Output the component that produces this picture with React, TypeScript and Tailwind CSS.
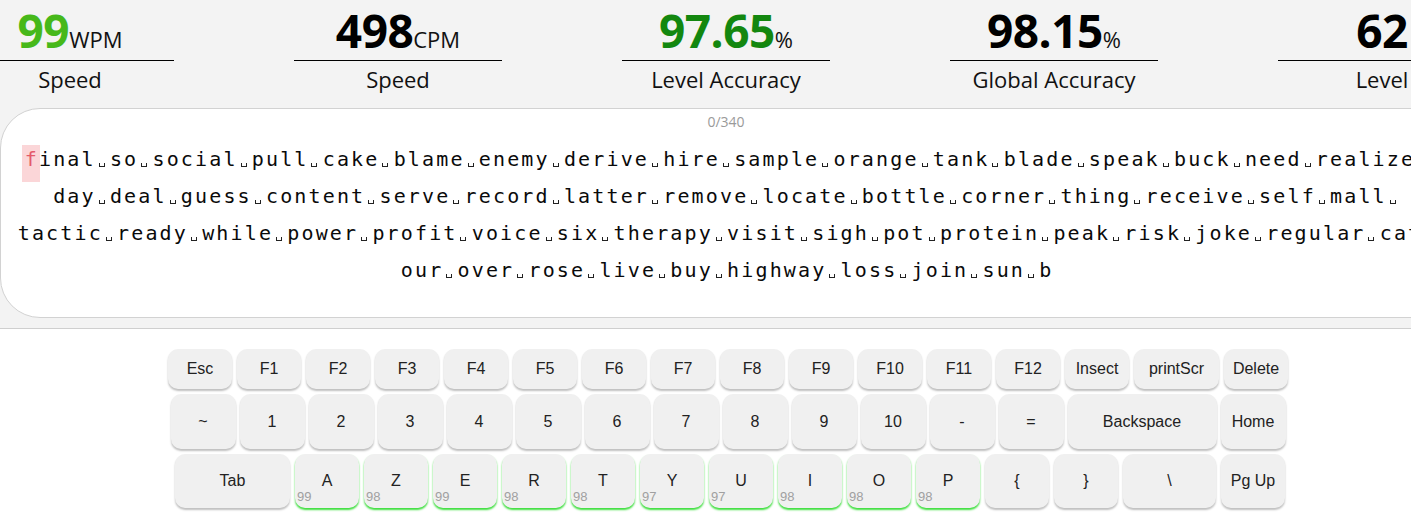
import React from 'react'

// stats across the top
const STATS = [
  { value: '99', unit: 'WPM', label: 'Speed', cls: 'text-[#46b81a]' },
  { value: '498', unit: 'CPM', label: 'Speed', cls: 'text-black' },
  { value: '97.65', unit: '%', label: 'Level Accuracy', cls: 'text-[#13870f]' },
  { value: '98.15', unit: '%', label: 'Global Accuracy', cls: 'text-black' },
  { value: '62', unit: '', label: 'Level', cls: 'text-black' },
]

const LINES = [
  'final so social pull cake blame enemy derive hire sample orange tank blade speak buck need realize ',
  'day deal guess content serve record latter remove locate bottle corner thing receive self mall ',
  'tactic ready while power profit voice six therapy visit sigh pot protein peak risk joke regular cat ',
  'our over rose live buy highway loss join sun b',
]

type Key = { label: string; w: string; score?: number }

const ROW1: Key[] = [
  { label: 'Esc', w: 'w-[64px]' },
  ...['F1', 'F2', 'F3', 'F4', 'F5', 'F6', 'F7', 'F8', 'F9', 'F10', 'F11', 'F12', 'Insect'].map(l => ({ label: l, w: 'w-[64px]' })),
  { label: 'printScr', w: 'w-[85px]' },
  { label: 'Delete', w: 'w-[64px]' },
]

const ROW2: Key[] = [
  ...['~', '1', '2', '3', '4', '5', '6', '7', '8', '9', '10', '-', '='].map(l => ({ label: l, w: 'w-[65px]' })),
  { label: 'Backspace', w: 'w-[149px]' },
  { label: 'Home', w: 'w-[65px]' },
]

const LETTERS: [string, number][] = [
  ['A', 99], ['Z', 98], ['E', 99], ['R', 98], ['T', 98],
  ['Y', 97], ['U', 97], ['I', 98], ['O', 98], ['P', 98],
]

const ROW3: Key[] = [
  { label: 'Tab', w: 'w-[115px]' },
  ...LETTERS.map(([l, s]) => ({ label: l, w: 'w-[64px]', score: s })),
  { label: '{', w: 'w-[64px]' },
  { label: '}', w: 'w-[64px]' },
  { label: '\\', w: 'w-[93px]' },
  { label: 'Pg Up', w: 'w-[64px]' },
]

function Char({ c, first }: { c: string; first: boolean }) {
  if (c === ' ') {
    return (
      <span className="relative inline-block w-[14.2px] h-[1em] align-baseline">
        <span className="absolute left-[4px] bottom-[-1px] w-[6px] h-[4px] border-x border-b border-[#222]" />
      </span>
    )
  }
  if (first) {
    // current letter: taller pink block behind it
    return (
      <span className="inline-block w-[18px] -mx-[1.9px] pb-[8px] text-center bg-[#fbd6d8] text-[#e45a6a]">{c}</span>
    )
  }
  return <span className="inline-block w-[14.2px] text-center">{c}</span>
}

function KeyCap({ k, h }: { k: Key; h: string }) {
  const green = k.score !== undefined
  return (
    <div className={`relative ${k.w} ${h} shrink-0 flex items-center justify-center rounded-[10px] bg-[#f0f0f0] text-[16px] text-[#222] ${
      green ? 'shadow-[0_2px_2px_#3fdf3f]' : 'shadow-[0_2px_2px_rgba(0,0,0,0.25)]'
    }`}>
      {k.label}
      {green && (
        <span className="absolute left-[2px] bottom-[5px] text-[13px] leading-none text-[#a0a0a0]">{k.score}</span>
      )}
    </div>
  )
}

export default function App() {
  return (
    <div className="w-full h-[512px] overflow-hidden bg-white">
      <div className="w-[1452px]">
        <div className="bg-[#f3f3f3] pb-[10px]" style={{ fontFamily: '"Open Sans", "Noto Sans", sans-serif' }}>
          {/* stats */}
          <div className="flex justify-center gap-[120px] h-[108px]">
            {STATS.map((s, i) => (
              <div key={i} className="w-[208px] shrink-0">
                <div className="h-[60px] flex flex-col justify-end pb-[7px]">
                  <div className="flex items-baseline justify-center leading-none">
                    <span className={`text-[46px] font-bold tracking-[-0.5px] ${s.cls}`}>{s.value}</span>
                    {s.unit && <span className="text-[22px] text-[#111]">{s.unit}</span>}
                  </div>
                </div>
                <div className="border-t border-black text-center text-[22px] leading-[36px] text-[#111]">{s.label}</div>
              </div>
            ))}
          </div>

          {/* text to type */}
          <div className="h-[210px] rounded-[40px] border border-[#d2d2d2] bg-white pt-[4px]">
            <p className="text-center text-[14px] leading-[18px] text-[#9a9a9a]">0/340</p>
            <div className="mt-[14px] text-[20px] leading-[29px] text-[#0a0a0a]" style={{ fontFamily: '"DejaVu Sans Mono", "Liberation Mono", monospace' }}>
              {LINES.map((line, li) => (
                <div key={li} className="h-[37px] flex justify-center whitespace-nowrap">
                  <span>
                    {line.split('').map((c, ci) => (
                      <Char key={ci} c={c} first={li === 0 && ci === 0} />
                    ))}
                  </span>
                </div>
              ))}
            </div>
          </div>
        </div>

        {/* keyboard */}
        <div className="border-t border-[#cfcfcf] pt-[20px] pl-[4px] flex flex-col items-center gap-[5px]" style={{ fontFamily: '"Liberation Sans", Arial, sans-serif' }}>
          <div className="flex gap-[5px]">
            {ROW1.map((k, i) => <KeyCap key={i} k={k} h="h-[40px]" />)}
          </div>
          <div className="flex gap-[4px]">
            {ROW2.map((k, i) => <KeyCap key={i} k={k} h="h-[55px]" />)}
          </div>
          <div className="flex gap-[5px] ml-[4px]">
            {ROW3.map((k, i) => <KeyCap key={i} k={k} h="h-[54px]" />)}
          </div>
        </div>
      </div>
    </div>
  )
}
